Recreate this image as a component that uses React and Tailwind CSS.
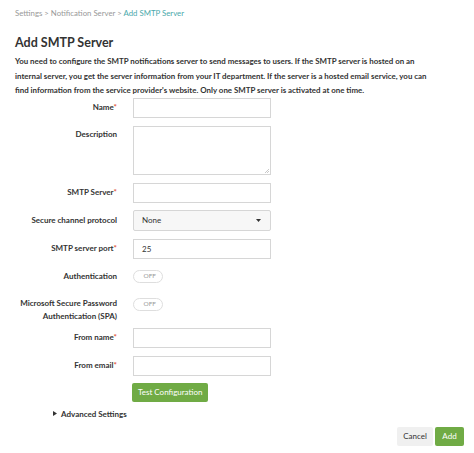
import React from 'react'

const font = { fontFamily: 'Lato, "Open Sans", sans-serif' }

function Label({ children, required, className = '' }) {
  return (
    <div className={`w-[120px] shrink-0 pr-[3px] text-right font-bold text-[8px] leading-[13px] text-[#333] ${className}`}>
      {children}
      {required && <span className="text-[#e0533a]">*</span>}
    </div>
  )
}

function Input({ value = '' }) {
  return (
    <div className="ml-[13px] flex h-[20px] w-[138px] items-center border border-[#d6d6d6] bg-white px-[8px] text-[8px] text-[#333]">
      {value}
    </div>
  )
}

function Toggle() {
  return (
    <div className="ml-[13px] flex h-[13px] w-[30px] items-center justify-end rounded-full border border-[#dedede] bg-white pr-[6px] text-[6.5px] text-[#999]">
      OFF
    </div>
  )
}

export default function App() {
  return (
    <div className="h-[453px] w-[474px] overflow-hidden bg-white text-[#333]" style={font}>
      <div className="px-[15px] pt-[7px] text-[7.8px] leading-[12px] text-[#999]">
        Settings &gt; Notification Server &gt;{' '}
        <span className="text-[#4aa9ab]">Add SMTP Server</span>
      </div>
      <h1 className="mt-[16px] px-[15px] text-[12.5px] font-bold leading-[16px] text-[#333]">
        Add SMTP Server
      </h1>
      <div className="mt-[3px] px-[15px] text-[7.9px] font-bold leading-[14.5px] text-[#333]">
        <div className="whitespace-nowrap">You need to configure the SMTP notifications server to send messages to users. If the SMTP server is hosted on an</div>
        <div className="whitespace-nowrap">internal server, you get the server information from your IT department. If the server is a hosted email service, you can</div>
        <div className="whitespace-nowrap">find information from the service provider's website. Only one SMTP server is activated at one time.</div>
      </div>

      <div className="flex flex-col">
        <div className="flex items-center">
          <Label required>Name</Label>
          <Input />
        </div>
        <div className="mt-[8px] flex items-start">
          <Label className="pt-[2px]">Description</Label>
          <div className="relative ml-[13px] h-[49px] w-[138px] border border-[#d6d6d6] bg-white">
            <svg className="absolute bottom-[1px] right-[1px]" width="5" height="5" viewBox="0 0 5 5">
              <path d="M5 1 L1 5 M5 3 L3 5" stroke="#bbb" strokeWidth="0.8" />
            </svg>
          </div>
        </div>
        <div className="mt-[8px] flex items-center">
          <Label required>SMTP Server</Label>
          <Input />
        </div>
        <div className="mt-[7px] flex items-center">
          <Label>Secure channel protocol</Label>
          <div className="ml-[13px] flex h-[21px] w-[138px] items-center justify-between rounded-[2px] border border-[#d6d6d6] bg-[#f7f7f7] pl-[8px] pr-[9px] text-[8px] text-[#333]">
            <span>None</span>
            <svg width="5" height="3" viewBox="0 0 5 3">
              <path d="M0 0 L5 0 L2.5 3 Z" fill="#333" />
            </svg>
          </div>
        </div>
        <div className="mt-[8px] flex items-center">
          <Label required>SMTP server port</Label>
          <Input value="25" />
        </div>
        <div className="mt-[11px] flex items-center">
          <Label>Authentication</Label>
          <Toggle />
        </div>
        <div className="mt-[15px] flex items-start">
          <Label className="mt-[-1px]">
            Microsoft Secure Password
            <br />
            Authentication (SPA)
          </Label>
          <Toggle />
        </div>
        <div className="mt-[5px] flex items-center">
          <Label required>From name</Label>
          <Input />
        </div>
        <div className="mt-[8px] flex items-center">
          <Label required>From email</Label>
          <Input />
        </div>
        <div className="mt-[7px] flex">
          <div className="w-[120px] shrink-0" />
          <button className="ml-[12px] h-[19px] rounded-[2px] bg-[#70ab45] px-[6px] text-[8px] text-white">
            Test Configuration
          </button>
        </div>
        <div className="mt-[6px] flex items-center pl-[53px] text-[8px] font-bold text-[#333]">
          <svg width="4" height="5" viewBox="0 0 4 5" className="mr-[4px]">
            <path d="M0 0 L4 2.5 L0 5 Z" fill="#333" />
          </svg>
          Advanced Settings
        </div>
        <div className="mt-[7px] flex justify-end gap-[2px] pr-[10px]">
          <button className="h-[19px] w-[36px] rounded-[2px] bg-[#f0f0f0] text-[8px] text-[#333]">
            Cancel
          </button>
          <button className="h-[19px] w-[29px] rounded-[2px] bg-[#70ab45] text-[8px] text-white">
            Add
          </button>
        </div>
      </div>
    </div>
  )
}
